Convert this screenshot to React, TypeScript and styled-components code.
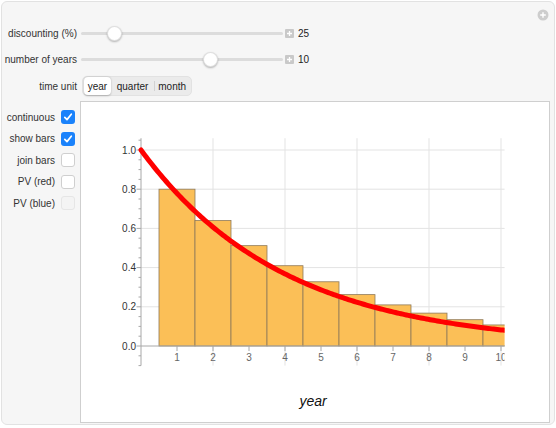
import React from "react";
import styled, { createGlobalStyle } from "styled-components";

const Global = createGlobalStyle`
  html, body { margin: 0; padding: 0; background: #ffffff; }
  body { font-family: "Liberation Sans", Arial, sans-serif; }
`;

const Panel = styled.div`
  position: relative;
  box-sizing: border-box;
  margin: 1px 0 0 1px;
  width: 554px;
  height: 424px;
  border: 1px solid #e2e2e2;
  border-radius: 6px;
  background: #f6f6f6;
  padding-top: 21px;
  display: flex;
  flex-direction: column;
`;

const CornerIcon = styled.svg`
  position: absolute;
  right: 5px;
  top: 7px;
  width: 12px;
  height: 12px;
`;

const Controls = styled.div`
  display: grid;
  grid-template-columns: 75px 1fr;
  column-gap: 4px;
  row-gap: 6.5px;
  grid-auto-rows: 20px;
  align-items: center;
`;

const Label = styled.div`
  font-size: 10px;
  color: #333;
  text-align: right;
  white-space: nowrap;
`;

const SliderCell = styled.div`
  display: flex;
  align-items: center;
`;

const Track = styled.div`
  position: relative;
  width: 202px;
  height: 3px;
  border-radius: 2px;
  background: #dcdcdc;
`;

const Thumb = styled.div`
  position: absolute;
  top: 50%;
  width: 15px;
  height: 15px;
  margin-left: -7.5px;
  margin-top: -7.5px;
  box-sizing: border-box;
  border-radius: 50%;
  background: #ffffff;
  border: 0.5px solid rgba(0, 0, 0, 0.12);
  box-shadow: 0 1px 2px rgba(0, 0, 0, 0.28);
`;

const PlusBox = styled.svg`
  width: 9px;
  height: 9px;
  margin-left: 2px;
  margin-right: 4px;
`;

const Value = styled.span`
  font-size: 10px;
  color: #222;
`;

const Segments = styled.div`
  display: flex;
  align-items: center;
  width: 110px;
  height: 20px;
  box-sizing: border-box;
  margin-left: 1px;
  padding: 1px;
  border-radius: 5px;
  background: #ebebeb;
  border: 0.5px solid #e2e2e2;
`;

const Segment = styled.div<{ $active?: boolean; $sep?: boolean; $w: number }>`
  position: relative;
  width: ${(p) => p.$w}px;
  height: 18px;
  box-sizing: border-box;
  display: flex;
  align-items: center;
  justify-content: center;
  font-size: 10px;
  color: #222;
  border-radius: 4px;
  background: ${(p) => (p.$active ? "#ffffff" : "transparent")};
  box-shadow: ${(p) => (p.$active ? "0 0.5px 2px rgba(0,0,0,0.25)" : "none")};
  &::before {
    content: "";
    display: ${(p) => (p.$sep ? "block" : "none")};
    position: absolute;
    left: 0;
    top: 4px;
    bottom: 4px;
    width: 1px;
    background: #d2d2d2;
  }
`;

const Body = styled.div`
  display: flex;
  margin-top: 4.5px;
`;

const Checks = styled.div`
  width: 78px;
  box-sizing: border-box;
  padding: 9.5px 5px 0 0;
  display: flex;
  flex-direction: column;
  align-items: flex-end;
  gap: 7.5px;
`;

const CheckRow = styled.div`
  display: flex;
  align-items: center;
  gap: 6px;
  height: 14px;
`;

const Box = styled.div<{ $checked?: boolean; $disabled?: boolean }>`
  width: 14px;
  height: 14px;
  box-sizing: border-box;
  border-radius: 3px;
  display: flex;
  align-items: center;
  justify-content: center;
  background: ${(p) => (p.$checked ? "#1a82fb" : p.$disabled ? "#f4f4f4" : "#ffffff")};
  border: ${(p) =>
    p.$checked ? "none" : p.$disabled ? "1px solid #e6e6e6" : "1px solid #cfcfcf"};
`;

const PlotFrame = styled.div`
  width: 470px;
  height: 322px;
  box-sizing: border-box;
  border: 1px solid #cfcfcf;
  background: #ffffff;
`;

const PlotSvg = styled.svg`
  display: block;
`;

const X = (t: number) => 60 + 36 * t;
const Y = (v: number) => 244 - 196 * v;

function Slider({ pos, value }: { pos: number; value: string }) {
  return (
    <SliderCell>
      <Track>
        <Thumb style={{ left: pos }} />
      </Track>
      <PlusBox viewBox="0 0 9 9">
        <rect x="0" y="0" width="9" height="9" rx="1" fill="#c9c9c9" />
        <path d="M4.5 2v5M2 4.5h5" stroke="#fff" strokeWidth="1.3" />
      </PlusBox>
      <Value>{value}</Value>
    </SliderCell>
  );
}

function Check({ label, checked, disabled }: { label: string; checked?: boolean; disabled?: boolean }) {
  return (
    <CheckRow>
      <Label>{label}</Label>
      <Box $checked={checked} $disabled={disabled}>
        {checked && (
          <svg width="10" height="10" viewBox="0 0 10 10">
            <path d="M1.8 5.3l2.2 2.3 4.3-5.4" fill="none" stroke="#fff" strokeWidth="1.7" strokeLinecap="round" strokeLinejoin="round" />
          </svg>
        )}
      </Box>
    </CheckRow>
  );
}

function Plot() {
  const tMax = 10.1;
  const curve: string[] = [];
  for (let i = 0; i <= 200; i++) {
    const t = (tMax * i) / 200;
    curve.push(`${X(t).toFixed(2)},${Y(Math.exp(-0.25 * t)).toFixed(2)}`);
  }
  const yTicks: number[] = [];
  for (let k = -2; k <= 21; k++) yTicks.push(k * 0.05);
  const bars = Array.from({ length: 10 }, (_, i) => i + 1);
  return (
    <PlotSvg width="468" height="320" viewBox="0 0 468 320">
      <defs>
        <clipPath id="plotClip">
          <rect x="0" y="0" width={X(tMax)} height="320" />
        </clipPath>
      </defs>
      <g stroke="#e3e3e3" strokeWidth="1">
        {[2, 4, 6, 8, 10].map((t) => (
          <line key={t} x1={X(t)} x2={X(t)} y1={Y(1.06)} y2={Y(-0.1)} />
        ))}
        {[0.2, 0.4, 0.6, 0.8, 1.0].map((v) => (
          <line key={v} x1={X(0)} x2={X(tMax)} y1={Y(v)} y2={Y(v)} />
        ))}
      </g>
      <g clipPath="url(#plotClip)">
        {bars.map((t) => {
          const h = Math.pow(1.25, -t);
          return (
            <rect
              key={t}
              x={X(t - 0.5)}
              y={Y(h)}
              width={36}
              height={Y(0) - Y(h)}
              fill="#fbbf57"
              stroke="#8f7a5a"
              strokeWidth="0.8"
            />
          );
        })}
      </g>
      <line x1={X(0)} x2={X(tMax)} y1={Y(0)} y2={Y(0)} stroke="#a8a8a8" strokeWidth="1" />
      <line x1={X(0)} x2={X(0)} y1={Y(1.06)} y2={Y(-0.1)} stroke="#a8a8a8" strokeWidth="1" />
      <g stroke="#a8a8a8" strokeWidth="1">
        {yTicks.map((v, i) => {
          const major = Math.abs(Math.round(v * 10) - v * 10) < 1e-6 && Math.round(v * 10) % 2 === 0;
          return <line key={i} x1={X(0) - (major ? 4.5 : 2.5)} x2={X(0)} y1={Y(v)} y2={Y(v)} />;
        })}
      </g>
      <g clipPath="url(#plotClip)">
        <g stroke="#a8a8a8" strokeWidth="1">
          {bars.map((t) => (
            <line key={t} x1={X(t)} x2={X(t)} y1={Y(0)} y2={Y(0) + 5} />
          ))}
        </g>
        <g fontSize="10" fill="#666" textAnchor="middle" fontFamily="Liberation Sans, Arial, sans-serif">
          {bars.map((t) => (
            <text key={t} x={X(t)} y={Y(0) + 15}>
              {t}
            </text>
          ))}
        </g>
        <polyline points={curve.join(" ")} fill="none" stroke="#ff0000" strokeWidth="5" strokeLinecap="round" strokeLinejoin="round" />
      </g>
      <g fontSize="10" fill="#333" textAnchor="end" fontFamily="Liberation Sans, Arial, sans-serif">
        {[0, 0.2, 0.4, 0.6, 0.8, 1.0].map((v) => (
          <text key={v} x={X(0) - 5} y={Y(v) + 3.5}>
            {v.toFixed(1)}
          </text>
        ))}
      </g>
      <text
        x={232}
        y={304}
        fontSize="14"
        fontStyle="italic"
        fill="#111"
        textAnchor="middle"
        fontFamily="Liberation Sans, Arial, sans-serif"
      >
        year
      </text>
    </PlotSvg>
  );
}

export default function App() {
  return (
    <>
      <Global />
      <Panel>
        <CornerIcon viewBox="0 0 12 12">
          <circle cx="6" cy="6" r="5.5" fill="#cdcdcd" />
          <path d="M6 3.2v5.6M3.2 6h5.6" stroke="#fff" strokeWidth="1.4" />
        </CornerIcon>
        <Controls>
          <Label>discounting (%)</Label>
          <Slider pos={33} value="25" />
          <Label>number of years</Label>
          <Slider pos={129.5} value="10" />
          <Label>time unit</Label>
          <Segments>
            <Segment $active $w={27}>year</Segment>
            <Segment $w={44}>quarter</Segment>
            <Segment $sep $w={36}>month</Segment>
          </Segments>
        </Controls>
        <Body>
          <Checks>
            <Check label="continuous" checked />
            <Check label="show bars" checked />
            <Check label="join bars" />
            <Check label="PV (red)" />
            <Check label="PV (blue)" disabled />
          </Checks>
          <PlotFrame>
            <Plot />
          </PlotFrame>
        </Body>
      </Panel>
    </>
  );
}
